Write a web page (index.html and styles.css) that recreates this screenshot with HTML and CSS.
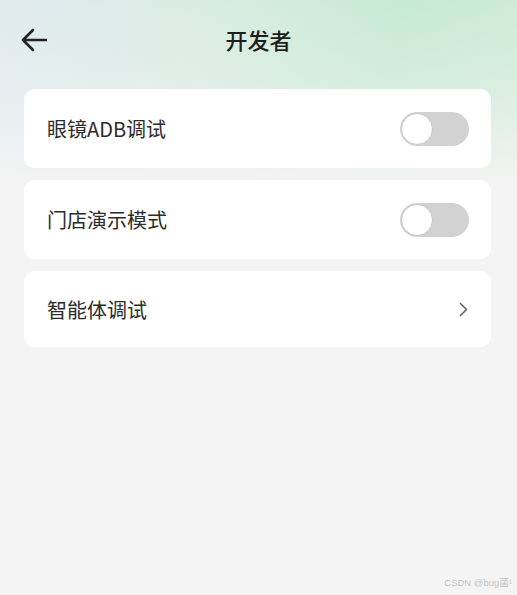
FILE: index.html
```html
<!DOCTYPE html>
<html lang="zh-CN">
<head>
    <meta charset="UTF-8">
    <meta name="viewport" content="width=device-width, initial-scale=1.0">
    <title>开发者</title>
    <link rel="stylesheet" href="styles.css">
</head>
<body>
    <div class="page">
        <div class="header">
            <button class="back" aria-label="返回">
                <svg width="26" height="24" viewBox="0 0 26 24">
                    <path d="M2 12 H25 M12 2 L2 12 L12 22" fill="none" stroke="#222" stroke-width="2.6" stroke-linecap="round" stroke-linejoin="round"/>
                </svg>
            </button>
            <h1>开发者</h1>
        </div>

        <div class="list">
            <div class="item">
                <span class="label">眼镜ADB调试</span>
                <span class="switch"><span class="knob"></span></span>
            </div>
            <div class="item">
                <span class="label">门店演示模式</span>
                <span class="switch"><span class="knob"></span></span>
            </div>
            <div class="item short">
                <span class="label">智能体调试</span>
                <svg class="chevron" width="9" height="15" viewBox="0 0 9 15">
                    <path d="M1.5 1.5 L7.5 7.5 L1.5 13.5" fill="none" stroke="#666" stroke-width="1.7" stroke-linecap="round" stroke-linejoin="round"/>
                </svg>
            </div>
        </div>

        <div class="watermark">CSDN @bug菌¹</div>
    </div>
</body>
</html>
```

FILE: styles.css
```css
html, body {
    margin: 0;
    padding: 0;
}

body {
    background-color: #f4f4f4;
    font-family: "Noto Sans CJK SC", "Noto Sans", sans-serif;
}

.page {
    position: relative;
    height: 595px;
    background:
        linear-gradient(180deg, rgba(244,244,244,0) 0px, rgba(244,244,244,0.3) 85px, #f4f4f4 190px),
        linear-gradient(100deg, #dfeaef 0%, #d8ece1 35%, #c6ead2 65%, #d3ecd9 100%);
    overflow: hidden;
}

.header {
    position: relative;
    height: 78px;
    display: flex;
    align-items: center;
    justify-content: center;
}

.header h1 {
    margin: 0;
    font-size: 22px;
    font-weight: 500;
    color: #1e1e1e;
}

.back {
    position: absolute;
    left: 21px;
    top: 28px;
    padding: 0;
    border: none;
    background: none;
    cursor: pointer;
    display: flex;
}

.list {
    margin-top: 11px;
    padding: 0 26px 0 24px;
    display: flex;
    flex-direction: column;
    gap: 12px;
}

.item {
    height: 79px;
    background-color: #fff;
    border-radius: 11px;
    display: flex;
    align-items: center;
    justify-content: space-between;
    padding: 0 22px 0 23px;
}

.item.short {
    height: 76px;
}

.label {
    font-size: 20px;
    color: #2b2b2b;
}

.switch {
    width: 69px;
    height: 34px;
    border-radius: 17px;
    background-color: #d2d2d2;
    display: flex;
    align-items: center;
    padding: 0 1px;
    box-sizing: border-box;
}

.knob {
    width: 30px;
    height: 30px;
    border-radius: 50%;
    background-color: #fff;
    border: 1px solid #c6c6c6;
}

.chevron {
    margin-right: 1px;
}

.watermark {
    position: absolute;
    right: 5px;
    bottom: 6px;
    font-size: 9.5px;
    color: #c4c4c4;
    font-family: "Liberation Sans", "Noto Sans CJK SC", sans-serif;
}
```
